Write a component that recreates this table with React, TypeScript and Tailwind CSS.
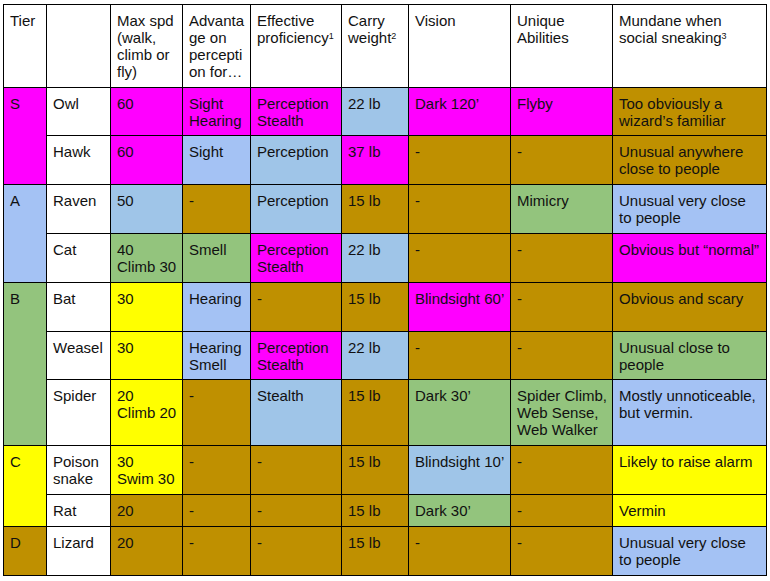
const M = "bg-[#ff00ff]";
const B1 = "bg-[#a4c2f4]";
const B2 = "bg-[#9fc5e8]";
const G = "bg-[#bf9000]";
const GR = "bg-[#93c47d]";
const Y = "bg-[#ffff00]";
const W = "bg-white";

type Cell = [string, string];

type Row = {
  tier?: { label: string; color: string; span: string };
  name: string;
  cells: Cell[];
};

const rows: Row[] = [
  {
    tier: { label: "S", color: M, span: "row-span-2" },
    name: "Owl",
    cells: [
      ["60", M],
      ["Sight\nHearing", M],
      ["Perception\nStealth", M],
      ["22 lb", B2],
      ["Dark 120’", M],
      ["Flyby", M],
      ["Too obviously a\nwizard’s familiar", G],
    ],
  },
  {
    name: "Hawk",
    cells: [
      ["60", M],
      ["Sight", B1],
      ["Perception", B2],
      ["37 lb", M],
      ["-", G],
      ["-", G],
      ["Unusual anywhere\nclose to people", G],
    ],
  },
  {
    tier: { label: "A", color: B1, span: "row-span-2" },
    name: "Raven",
    cells: [
      ["50", B2],
      ["-", G],
      ["Perception", B2],
      ["15 lb", G],
      ["-", G],
      ["Mimicry", GR],
      ["Unusual very close\nto people", B1],
    ],
  },
  {
    name: "Cat",
    cells: [
      ["40\nClimb 30", GR],
      ["Smell", GR],
      ["Perception\nStealth", M],
      ["22 lb", B2],
      ["-", G],
      ["-", G],
      ["Obvious but “normal”", M],
    ],
  },
  {
    tier: { label: "B", color: GR, span: "row-span-3" },
    name: "Bat",
    cells: [
      ["30", Y],
      ["Hearing", B1],
      ["-", G],
      ["15 lb", G],
      ["Blindsight 60’", M],
      ["-", G],
      ["Obvious and scary", G],
    ],
  },
  {
    name: "Weasel",
    cells: [
      ["30", Y],
      ["Hearing\nSmell", B1],
      ["Perception\nStealth", M],
      ["22 lb", B2],
      ["-", G],
      ["-", G],
      ["Unusual close to\npeople", GR],
    ],
  },
  {
    name: "Spider",
    cells: [
      ["20\nClimb 20", Y],
      ["-", G],
      ["Stealth", B2],
      ["15 lb", G],
      ["Dark 30’", GR],
      ["Spider Climb,\nWeb Sense,\nWeb Walker", GR],
      ["Mostly unnoticeable,\nbut vermin.", B1],
    ],
  },
  {
    tier: { label: "C", color: Y, span: "row-span-2" },
    name: "Poison\nsnake",
    cells: [
      ["30\nSwim 30", Y],
      ["-", G],
      ["-", G],
      ["15 lb", G],
      ["Blindsight 10’", B2],
      ["-", G],
      ["Likely to raise alarm", Y],
    ],
  },
  {
    name: "Rat",
    cells: [
      ["20", G],
      ["-", G],
      ["-", G],
      ["15 lb", G],
      ["Dark 30’", GR],
      ["-", G],
      ["Vermin", Y],
    ],
  },
  {
    tier: { label: "D", color: G, span: "row-span-1" },
    name: "Lizard",
    cells: [
      ["20", G],
      ["-", G],
      ["-", G],
      ["15 lb", G],
      ["-", G],
      ["-", G],
      ["Unusual very close\nto people", B1],
    ],
  },
];

function Td({ children, className = "" }: { children: React.ReactNode; className?: string }) {
  return (
    <div className={"pt-[7px] pl-[6px] pr-[2px] whitespace-pre-line text-[#111] " + className}>
      {children}
    </div>
  );
}

export default function App() {
  return (
    <div className="min-h-screen bg-white pt-[4px] pl-[3px] font-['Liberation_Sans',Arial,sans-serif] text-[15px] leading-[17px]">
      <div className="grid w-[764px] grid-cols-[42px_63px_71px_67px_90px_66px_101px_101px_153px] grid-rows-[82px_47px_48px_48px_48px_48px_47px_65px_48px_31px_48px] gap-px bg-black p-px">
        {/* header */}
        <Td className={W}>Tier</Td>
        <Td className={W}></Td>
        <Td className={W}>{"Max spd\n(walk,\nclimb or\nfly)"}</Td>
        <Td className={W}>{"Advanta\nge on\npercepti\non for…"}</Td>
        <Td className={W}>
          {"Effective\nproficiency"}
          <sup className="text-[9px]">1</sup>
        </Td>
        <Td className={W}>
          {"Carry\nweight"}
          <sup className="text-[9px]">2</sup>
        </Td>
        <Td className={W}>Vision</Td>
        <Td className={W}>{"Unique\nAbilities"}</Td>
        <Td className={W}>
          {"Mundane when\nsocial sneaking"}
          <sup className="text-[9px]">3</sup>
        </Td>

        {rows.map((r) => (
          <div key={r.name} className="contents">
            {r.tier && <Td className={r.tier.color + " " + r.tier.span}>{r.tier.label}</Td>}
            <Td className={W + " col-start-2"}>{r.name}</Td>
            {r.cells.map(([text, color], i) => (
              <Td key={i} className={color}>
                {text}
              </Td>
            ))}
          </div>
        ))}
      </div>
    </div>
  );
}
